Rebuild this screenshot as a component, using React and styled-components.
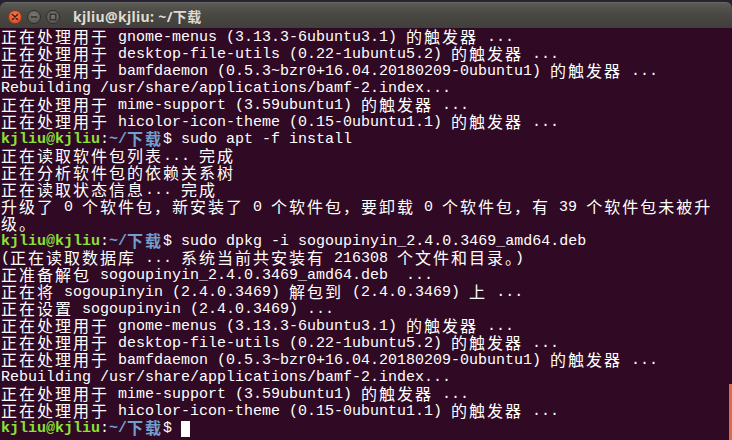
import React from "react";
import styled, { createGlobalStyle } from "styled-components";

const Global = createGlobalStyle`
  html, body { margin: 0; padding: 0; background: #2a2637; overflow: hidden; }
  #root { width: 732px; height: 440px; }
`;

const Desktop = styled.div`
  width: 732px;
  height: 440px;
  padding-top: 2px;
  box-sizing: border-box;
  background: #26222f;
`;

const Window = styled.div`
  position: relative;
  height: 438px;
  display: flex;
  flex-direction: column;
  border-radius: 6px 6px 0 0;
  overflow: hidden;
  border-bottom: 1px solid #9a9996;
`;

const TitleBar = styled.div`
  height: 26px;
  flex: none;
  display: flex;
  align-items: center;
  padding-left: 8px;
  background: linear-gradient(#5c5a55, #4a4944 40%, #403f3b);
  border-top: 1px solid #6a6863;
  box-sizing: border-box;
`;

const Buttons = styled.div`
  display: flex;
  align-items: center;
  gap: 5px;
  margin-right: 13px;
  margin-top: 2px;
`;

const CircleButton = styled.div`
  width: 14px;
  height: 14px;
  border-radius: 50%;
  display: flex;
  align-items: center;
  justify-content: center;
  box-sizing: border-box;
  border: 1px solid ${(p) => (p.$close ? "#8e3a1f" : "#2f2e2b")};
  background: ${(p) =>
    p.$close
      ? "radial-gradient(circle at 50% 35%, #f47a4e, #e4552a 70%)"
      : "radial-gradient(circle at 50% 35%, #7a7872, #5e5c57 70%)"};
  svg { display: block; }
`;

const Title = styled.div`
  font-family: "Noto Sans", "Noto Sans CJK SC", sans-serif;
  font-weight: 700;
  font-size: 14px;
  color: #dfdbd2;
  margin-top: 1px;
  letter-spacing: 0.35px;
`;

const Terminal = styled.div`
  flex: 1;
  background: #300a24;
  padding: 1px 0 0 1px;
  box-sizing: border-box;
  color: #ffffff;
  font-family: "Liberation Mono", monospace;
  font-size: 15px;
`;

const Line = styled.div`
  height: 17px;
  line-height: 17px;
  white-space: pre;
`;

const Wide = styled.span`
  font-family: "Noto Sans CJK SC", sans-serif;
  font-size: 16px;
  line-height: 15px;
  letter-spacing: 2px;
  vertical-align: top;
`;

const User = styled.span`
  color: #8ae234;
  font-weight: 700;
`;

const Path = styled.span`
  color: #729fcf;
  font-weight: 700;
`;

const Cursor = styled.span`
  display: inline-block;
  width: 9px;
  height: 16px;
  background: #ffffff;
  vertical-align: top;
  margin-top: 1px;
`;

const Scrollbar = styled.div`
  position: absolute;
  right: 0;
  bottom: 0;
  width: 3px;
  height: 56px;
  background: #dd6b47;
`;

const isWide = (ch) => ch.charCodeAt(0) >= 0x2e80;

function Text({ s }) {
  const runs = [];
  let cur = "";
  let wide = null;
  for (const ch of s) {
    const w = isWide(ch);
    if (wide !== null && w !== wide) {
      runs.push({ text: cur, wide });
      cur = "";
    }
    wide = w;
    cur += ch;
  }
  if (cur) runs.push({ text: cur, wide });
  return runs.map((r, i) =>
    r.wide ? <Wide key={i}>{r.text}</Wide> : <React.Fragment key={i}>{r.text}</React.Fragment>
  );
}

function Prompt({ cmd, cursor }) {
  return (
    <Line>
      <User>kjliu@kjliu</User>:
      <Path>
        ~/<Wide>下载</Wide>
      </Path>
      $ {cmd}
      {cursor && <Cursor />}
    </Line>
  );
}

const triggers = [
  "正在处理用于 gnome-menus (3.13.3-6ubuntu3.1) 的触发器 ...",
  "正在处理用于 desktop-file-utils (0.22-1ubuntu5.2) 的触发器 ...",
  "正在处理用于 bamfdaemon (0.5.3~bzr0+16.04.20180209-0ubuntu1) 的触发器 ...",
  "Rebuilding /usr/share/applications/bamf-2.index...",
  "正在处理用于 mime-support (3.59ubuntu1) 的触发器 ...",
  "正在处理用于 hicolor-icon-theme (0.15-0ubuntu1.1) 的触发器 ...",
];

const lines = [
  ...triggers.map((s) => ({ s })),
  { prompt: "sudo apt -f install" },
  { s: "正在读取软件包列表... 完成" },
  { s: "正在分析软件包的依赖关系树" },
  { s: "正在读取状态信息... 完成" },
  { s: "升级了 0 个软件包，新安装了 0 个软件包，要卸载 0 个软件包，有 39 个软件包未被升" },
  { s: "级。" },
  { prompt: "sudo dpkg -i sogoupinyin_2.4.0.3469_amd64.deb" },
  { s: "(正在读取数据库 ... 系统当前共安装有 216308 个文件和目录。)" },
  { s: "正准备解包 sogoupinyin_2.4.0.3469_amd64.deb  ..." },
  { s: "正在将 sogoupinyin (2.4.0.3469) 解包到 (2.4.0.3469) 上 ..." },
  { s: "正在设置 sogoupinyin (2.4.0.3469) ..." },
  ...triggers.map((s) => ({ s })),
  { prompt: "", cursor: true },
];

export default function App() {
  return (
    <>
      <Global />
      <Desktop>
        <Window>
          <TitleBar>
            <Buttons>
              <CircleButton $close>
                <svg width="8" height="8" viewBox="0 0 8 8">
                  <path d="M1.5 1.5 L6.5 6.5 M6.5 1.5 L1.5 6.5" stroke="#3a1a10" strokeWidth="1.4" strokeLinecap="round" />
                </svg>
              </CircleButton>
              <CircleButton>
                <svg width="8" height="8" viewBox="0 0 8 8">
                  <path d="M1 4 H7" stroke="#2f2e2b" strokeWidth="1.5" />
                </svg>
              </CircleButton>
              <CircleButton>
                <svg width="8" height="8" viewBox="0 0 8 8">
                  <rect x="1.2" y="1.2" width="5.6" height="5.6" fill="none" stroke="#2f2e2b" strokeWidth="1.3" />
                </svg>
              </CircleButton>
            </Buttons>
            <Title>kjliu@kjliu: ~/下载</Title>
          </TitleBar>
          <Terminal>
            {lines.map((l, i) =>
              l.prompt !== undefined ? (
                <Prompt key={i} cmd={l.prompt} cursor={l.cursor} />
              ) : (
                <Line key={i}>
                  <Text s={l.s} />
                </Line>
              )
            )}
          </Terminal>
          <Scrollbar />
        </Window>
      </Desktop>
    </>
  );
}
